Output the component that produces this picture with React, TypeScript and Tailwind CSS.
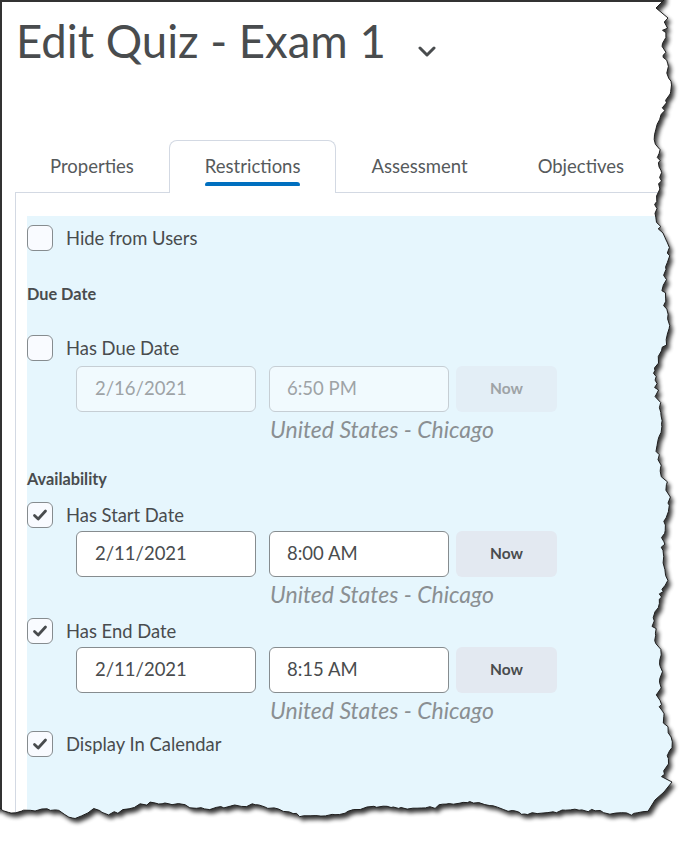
import React from "react";

function rng(seed: number) {
  let s = seed;
  return () => {
    s = (s * 16807) % 2147483647;
    return s / 2147483647;
  };
}

function buildTorn() {
  const r = rng(12345);
  const pts: [number, number][] = [];
  pts.push([-10, -10]);
  pts.push([664, -10]);
  pts.push([664, 0]);
  pts.push([656, 8]);
  pts.push([668, 18]);
  let y = 22;
  while (y < 780) {
    const x = 662 + 5 * Math.sin(y / 37) + 3.5 * Math.sin(y / 13 + 1) + (r() - 0.5) * 5;
    pts.push([x, y]);
    y += 2 + r() * 5;
  }
  pts.push([672, 782]);
  pts.push([664, 792]);
  pts.push([655, 800]);
  let x = 648;
  while (x > 0) {
    const yy = 809 + 4.5 * Math.sin(x / 41) + 3.5 * Math.sin(x / 17 + 2) + (r() - 0.5) * 3 - (Math.abs(x - 95) < 14 ? 8 * (1 - Math.abs(x - 95) / 14) : 0) + (Math.abs(x - 70) < 8 ? 4 : 0);
    pts.push([x, yy]);
    x -= 2 + r() * 5;
  }
  pts.push([0, 808]);
  pts.push([-10, 808]);
  return "M" + pts.map((p) => `${p[0].toFixed(1)},${p[1].toFixed(1)}`).join(" L") + " Z";
}

const TORN = buildTorn();
const OUTSIDE = "M-20,-20 H720 V870 H-20 Z " + TORN;

function Checkbox({ checked }: { checked?: boolean }) {
  return (
    <div className="w-[26px] h-[26px] shrink-0 rounded-[6px] border border-[#868c8f] bg-[#f9fbff] flex items-center justify-center">
      {checked && (
        <svg width="18" height="18" viewBox="0 0 18 18">
          <path d="M3.5 9.5 L7.2 13 L14.5 5" fill="none" stroke="#494c4e" strokeWidth="2.8" strokeLinecap="round" strokeLinejoin="round" />
        </svg>
      )}
    </div>
  );
}

function CheckRow({ label, checked }: { label: string; checked?: boolean }) {
  return (
    <div className="flex items-center gap-[13px] h-[26px]">
      <Checkbox checked={checked} />
      <span className="text-[18.4px] text-[#494c4e] leading-none">{label}</span>
    </div>
  );
}

function DateRow({ date, time, disabled }: { date: string; time: string; disabled?: boolean }) {
  const inputCls = disabled
    ? "w-[180px] h-[46px] rounded-[6px] border border-[#c6ced4] bg-[#f1fafe] text-[#9ea3a6]"
    : "w-[180px] h-[46px] rounded-[6px] border border-[#868c8f] bg-white text-[#494c4e]";
  return (
    <div className="pl-[49px]">
      <div className="flex gap-[13px] items-center">
        <div className={inputCls + " flex items-center pl-[18px] text-[18.5px]"}>{date}</div>
        <div className={inputCls + " flex items-center pl-[17px] text-[18.5px]"}>{time}</div>
        <div
          className={
            (disabled ? "bg-[#e3eef6] text-[#9ea3a6]" : "bg-[#e3e9f1] text-[#494c4e]") +
            " -ml-[6px] w-[101px] h-[46px] rounded-[6px] flex items-center justify-center text-[15.5px] font-bold"
          }
        >
          Now
        </div>
      </div>
      <div className="ml-[194px] mt-[5px] h-[24px] flex items-center italic text-[23px] text-[#8a8f92]">
        United States - Chicago
      </div>
    </div>
  );
}

export default function App() {
  return (
    <div className="relative w-[697px] h-[844px] overflow-hidden bg-white font-['Lato',sans-serif]">
      <div className="h-full flex flex-col border-t-2 border-l-2 border-[#333]">
        <div className="pl-[14px] h-[139px] flex items-start">
          <div className="mt-[11px] flex items-center">
            <h1 className="text-[45.5px] text-[#494c4e] leading-[56px] font-normal">Edit Quiz - Exam 1</h1>
            <svg className="ml-[32px] mt-[22px]" width="18" height="12" viewBox="0 0 18 12">
              <path d="M2 2 L9 9 L16 2" fill="none" stroke="#494c4e" strokeWidth="3" strokeLinecap="round" strokeLinejoin="round" />
            </svg>
          </div>
        </div>
        <div className="ml-[13px] flex h-[52px] border-b border-[#d3d9e3] items-end">
          {["Properties", "Restrictions", "Assessment", "Objectives"].map((t) => {
            const active = t === "Restrictions";
            return (
              <div
                key={t}
                className={
                  (active
                    ? "border border-b-0 border-[#d3d9e3] rounded-t-[8px] bg-white -mb-px h-[53px] pt-[14px] "
                    : "h-[52px] pt-[15px] ") + "px-[35px] flex flex-col items-center"
                }
              >
                <span className="text-[18.5px] leading-[22px] text-[#565a5c]">{t}</span>
                {active && <div className="mt-[5px] h-[4px] w-full rounded-t-[3px] rounded-b-[1px] bg-[#006fbf]" />}
              </div>
            );
          })}
        </div>
        <div className="ml-[13px] flex-1 border-l border-[#d3d9e3] pl-[11px] pt-[23px]">
          <div className="h-full bg-[#e6f6fd] pt-[9px]">
            <CheckRow label="Hide from Users" />
            <div className="mt-[33px] h-[20px] flex items-center text-[16.3px] font-bold text-[#494c4e]">Due Date</div>
            <div className="mt-[31px]">
              <CheckRow label="Has Due Date" />
            </div>
            <div className="mt-[5px]">
              <DateRow date="2/16/2021" time="6:50 PM" disabled />
            </div>
            <div className="mt-[28px] h-[20px] flex items-center text-[16.3px] font-bold text-[#494c4e]">Availability</div>
            <div className="mt-[13px]">
              <CheckRow label="Has Start Date" checked />
            </div>
            <div className="mt-[3px]">
              <DateRow date="2/11/2021" time="8:00 AM" />
            </div>
            <div className="mt-[12px]">
              <CheckRow label="Has End Date" checked />
            </div>
            <div className="mt-[3px]">
              <DateRow date="2/11/2021" time="8:15 AM" />
            </div>
            <div className="mt-[9px]">
              <CheckRow label="Display In Calendar" checked />
            </div>
          </div>
        </div>
      </div>
      <svg className="absolute inset-0 pointer-events-none" width="697" height="844" viewBox="0 0 697 844">
        <defs>
          <filter id="blur" x="-10%" y="-10%" width="120%" height="120%">
            <feGaussianBlur stdDeviation="2.2" />
          </filter>
          <clipPath id="outside">
            <path d={OUTSIDE} clipRule="evenodd" />
          </clipPath>
        </defs>
        <path d={OUTSIDE} fill="#ffffff" fillRule="evenodd" />
        <g clipPath="url(#outside)">
          <path d={TORN} fill="#000" opacity="0.8" filter="url(#blur)" transform="translate(3,4)" />
        </g>
        <path d={TORN} fill="none" stroke="#1e1e1e" strokeWidth="1" />
      </svg>
    </div>
  );
}
